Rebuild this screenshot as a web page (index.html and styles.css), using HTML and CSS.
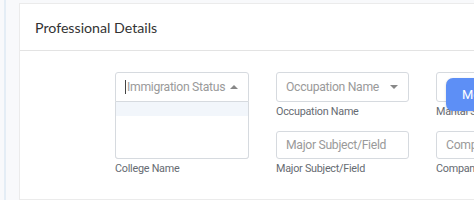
FILE: index.html
```html
<!DOCTYPE html>
<html lang="en">
<head>
  <meta charset="UTF-8" />
  <title>Professional Details</title>
  <link rel="stylesheet" href="styles.css">
</head>
<body>

<div class="rail"></div>

<section class="card">
  <div class="card-header">Professional Details</div>

  <div class="card-body">
    <!-- row 1 -->
    <div class="field">
      <div class="control select open">
        <span class="caret-line"></span>
        <span class="placeholder">Immigration Status</span>
        <span class="arrow up"></span>
        <div class="dropdown">
          <div class="option active"></div>
        </div>
      </div>
      <div class="label">Immigration Status</div>
    </div>
    <div class="field">
      <div class="control select">
        <span class="placeholder">Occupation Name</span>
        <span class="arrow down"></span>
      </div>
      <div class="label">Occupation Name</div>
    </div>
    <div class="field">
      <div class="control select">
        <span class="placeholder">Marital Status</span>
      </div>
      <div class="label">Marital Status</div>
    </div>

    <!-- row 2 -->
    <div class="field">
      <div class="control">
        <span class="placeholder">College Name</span>
      </div>
      <div class="label">College Name</div>
    </div>
    <div class="field">
      <div class="control">
        <span class="placeholder">Major Subject/Field</span>
      </div>
      <div class="label">Major Subject/Field</div>
    </div>
    <div class="field">
      <div class="control">
        <span class="placeholder">Company Name</span>
      </div>
      <div class="label">Company Name</div>
    </div>
  </div>

  <button class="float-btn">More</button>
</section>

</body>
</html>
```

FILE: styles.css
```css
body {
  margin: 0;
  display: flex;
  height: 200px;
  overflow: hidden;
  background: #f8f9fb;
  font-family: Roboto, 'Liberation Sans', sans-serif;
  color: #333;
}
.rail {
  flex: none;
  width: 13px;
  margin-left: 4px;
  border-left: 2px solid #e4edf5;
}
.card {
  position: relative;
  flex: none;
  width: 520px;
  margin-top: 3px;
  background: #fff;
  border: 1px solid #ebebeb;
  border-right: none;
}
.card-header {
  height: 46px;
  padding-left: 15px;
  display: flex;
  align-items: center;
  border-bottom: 1px solid #e3e3e3;
  font-family: Lato, 'Open Sans', sans-serif;
  font-size: 14.2px;
  color: #333;
}
.card-body {
  display: grid;
  grid-template-columns: 134px 133px 133px;
  column-gap: 27px;
  row-gap: 13px;
  padding: 21px 0 0 95px;
}
.control {
  position: relative;
  height: 26px;
  display: flex;
  align-items: center;
  padding: 0 10px 0 9px;
  border: 1px solid #d6dadf;
  border-radius: 3px;
  background: #fff;
}
.select {
  height: 28px;
}
.placeholder {
  font-size: 12.2px;
  letter-spacing: -0.3px;
  color: #9a9a9a;
  white-space: nowrap;
}
.caret-line {
  width: 1px;
  height: 14px;
  margin-right: 1px;
  background: #444;
}
.arrow {
  margin-left: auto;
  width: 0;
  height: 0;
  border-left: 4px solid transparent;
  border-right: 4px solid transparent;
}
.arrow.up { border-bottom: 4px solid #888; }
.arrow.down { border-top: 4px solid #888; }
.open {
  border-radius: 3px 3px 0 0;
}
.dropdown {
  position: absolute;
  z-index: 5;
  top: 28px;
  left: -1px;
  right: -1px;
  height: 56px;
  background: #fff;
  border: 1px solid #d6dadf;
  border-radius: 0 0 3px 3px;
}
.option {
  height: 14px;
}
.option.active {
  background: #f2f6fb;
}
.label {
  margin-top: 3px;
  font-size: 10.8px;
  letter-spacing: -0.25px;
  color: #666b72;
  white-space: nowrap;
}
.float-btn {
  position: absolute;
  top: 74px;
  left: 426px;
  width: 70px;
  height: 33px;
  padding: 0 0 0 16px;
  text-align: left;
  border: none;
  border-radius: 7px;
  background: #5d8ff6;
  color: #fff;
  font-family: Roboto, sans-serif;
  font-size: 13px;
  box-shadow: 0 1px 3px rgba(0,0,0,0.15);
}
```
